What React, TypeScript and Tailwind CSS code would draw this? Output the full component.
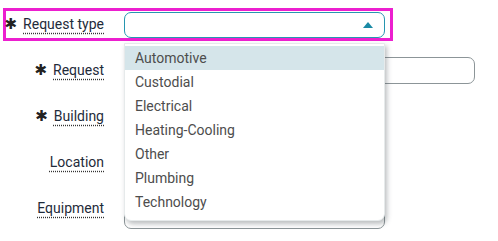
import React from 'react';

const options = ['Automotive', 'Custodial', 'Electrical', 'Heating-Cooling', 'Other', 'Plumbing', 'Technology'];

const Label: React.FC<{ text: string; required?: boolean }> = ({ text, required }) => (
  <div className="w-[104px] shrink-0 flex items-center justify-end gap-[6px] text-[14px] text-[#1f2b3a]">
    {required && <span className="text-[15px] leading-none font-['DejaVu_Sans',sans-serif] text-[#222]">✱</span>}
    <span className="underline decoration-dotted underline-offset-[4px] decoration-[#333]">{text}</span>
  </div>
);

export default function App() {
  return (
    <div className="relative w-[498px] h-[241px] bg-white overflow-hidden font-['Roboto',sans-serif]">
      <div className="flex flex-col pt-[8px]">
        {/* Request type, focused */}
        <div className="ml-[3px] w-[390px] h-[33px] border-[3px] border-[#ec1fcf] flex items-center">
          <div className="-ml-[6px] flex items-center">
            <Label text="Request type" required />
            <div className="ml-[20px] w-[261px] h-[26px] rounded-[7px] border border-[#2796b0] flex items-center justify-end pr-[11px]">
              <svg width="10" height="6" viewBox="0 0 10 6">
                <path d="M0 6 L5 0 L10 6 Z" fill="#1a8aa5" />
              </svg>
            </div>
          </div>
        </div>

        <div className="mt-[16px] flex flex-col gap-[19px]">
          <div className="flex items-center h-[27px]">
            <Label text="Request" required />
            <div className="ml-[20px] w-[351px] h-[27px] rounded-[7px] border border-[#8c9598]" />
          </div>
          <div className="flex items-center h-[27px]">
            <Label text="Building" required />
          </div>
          <div className="flex items-center h-[27px]">
            <Label text="Location" />
          </div>
          <div className="flex items-start">
            <div className="h-[27px] flex items-center">
              <Label text="Equipment" />
            </div>
            <div className="ml-[20px] w-[261px] h-[34px] rounded-[7px] border border-[#8c9598]" />
          </div>
        </div>
      </div>

      {/* Open dropdown list */}
      <ul className="absolute left-[124px] top-[43px] w-[261px] pt-[2px] pb-[6px] bg-white rounded-b-[7px] border border-[#e6eaeb] shadow-[2px_3px_5px_rgba(60,70,75,0.35)]">
        {options.map((o, i) => (
          <li
            key={o}
            className={`h-[24px] flex items-center pl-[10px] text-[14px] text-[#4d4d4d] ${i === 0 ? 'bg-[#d5e5ea]' : ''}`}
          >
            {o}
          </li>
        ))}
      </ul>
    </div>
  );
}
